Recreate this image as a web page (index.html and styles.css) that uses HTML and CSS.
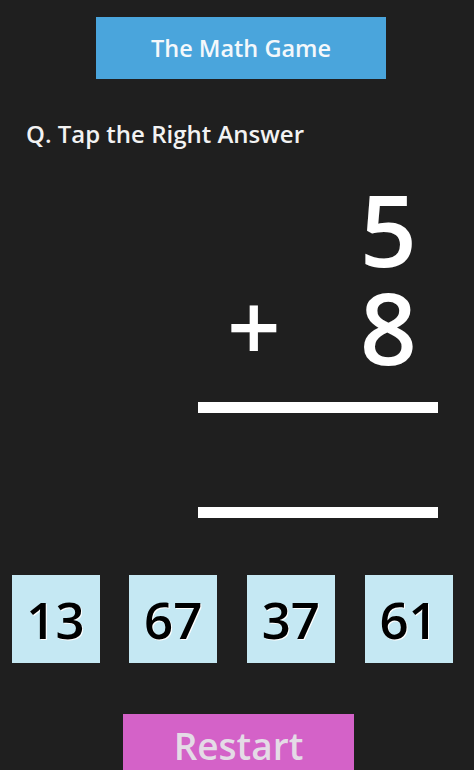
FILE: index.html
```html
<!DOCTYPE html>
<html>
<head>
<meta charset="utf-8">
<link rel="stylesheet" href="styles.css">
</head>
<body>
<div class="app">
  <header class="header"><div class="title">The Math Game</div></header>
  <p class="question">Q. Tap the Right Answer</p>
  <div class="problem">
    <div class="row"><span class="op"></span><span class="num">5</span></div>
    <div class="row"><span class="op">+</span><span class="num">8</span></div>
    <div class="bar bar-top"></div>
    <div class="answer-space"></div>
    <div class="bar"></div>
  </div>
  <div class="answers">
    <div class="choice">13</div>
    <div class="choice">67</div>
    <div class="choice">37</div>
    <div class="choice">61</div>
  </div>
  <div class="footer"><div class="restart">Restart</div></div>
</div>
</body>
</html>
```
FILE: styles.css
```css
html, body {
  margin: 0;
  padding: 0;
  background: #1f1f1f;
  height: 100%;
  overflow: hidden;
}
.app {
  font-family: "Open Sans", "Noto Sans", sans-serif;
  color: #fff;
  width: 474px;
  height: 770px;
}
.header {
  display: flex;
  padding: 17px 0 0 96px;
}
.title {
  width: 290px;
  height: 62px;
  background: #4aa5dc;
  display: flex;
  align-items: center;
  justify-content: center;
  font-size: 23.5px;
  font-weight: 600;
  color: #f4f8fb;
}
.question {
  margin: 0;
  padding: 39px 0 0 26px;
  font-size: 24px;
  font-weight: 600;
  line-height: 32px;
  color: #f2f2f2;
}
.problem {
  margin-left: 198px;
  width: 240px;
  margin-top: 29px;
}
.row {
  display: flex;
  align-items: center;
  height: 98px;
  font-size: 100px;
  font-weight: 600;
  line-height: 98px;
  color: #fff;
}
.op {
  width: 110px;
  padding-left: 29px;
  box-sizing: border-box;
  font-size: 94px;
}
.num {
  flex: 1;
  text-align: right;
  padding-right: 21px;
}
.bar {
  height: 11px;
  background: #fff;
}
.bar-top {
  margin-top: 27px;
}
.answer-space {
  height: 94px;
}
.answers {
  display: flex;
  gap: 29.7px;
  padding-left: 11.5px;
  margin-top: 57px;
}
.choice {
  width: 88px;
  height: 88px;
  background: #c5e8f3;
  display: flex;
  align-items: center;
  justify-content: center;
  font-size: 51px;
  font-weight: 600;
  color: #000;
  text-shadow: 1px 1px 0 #fff;
}
.footer {
  padding-left: 123px;
  margin-top: 51px;
}
.restart {
  width: 231px;
  height: 60px;
  background: #d462c8;
  display: flex;
  justify-content: center;
  align-items: flex-start;
  font-size: 37px;
  font-weight: 600;
  line-height: 64px;
  color: #e4dbe6;
}
```
